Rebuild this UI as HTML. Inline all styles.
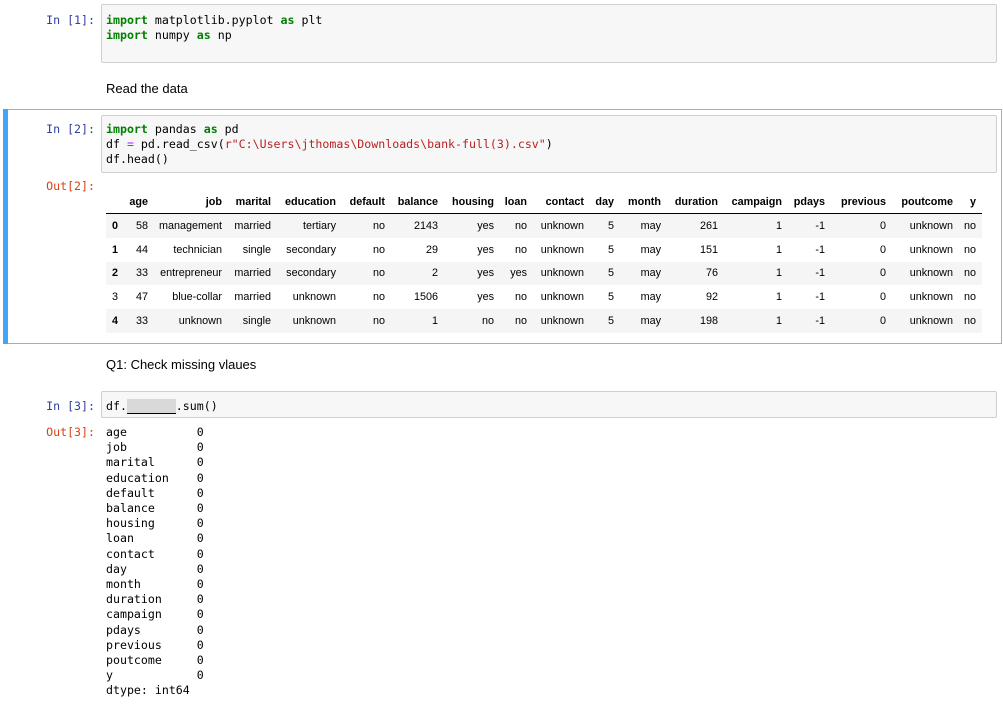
<!DOCTYPE html>
<html><head><meta charset="utf-8"><style>
body{margin:0;width:1003px;height:709px;background:#fff;position:relative;overflow:hidden;font-family:"Liberation Sans",Arial,sans-serif;}
.a{position:absolute;}
.mono{font-family:"DejaVu Sans Mono","Liberation Mono",monospace;font-size:11.6px;line-height:15.2px;white-space:pre;color:#000;}
.pin{color:#303F9F;text-align:right;width:95px;left:0;}
.pout{color:#D84315;text-align:right;width:95px;left:0;}
.box{background:#f7f7f7;border:1px solid #cfcfcf;border-radius:2px;box-sizing:border-box;}
.k{color:#008000;font-weight:bold;}
.s{color:#BA2121;}
.o{color:#AA22FF;}
.md{font-size:13px;color:#000;}
table{border-collapse:collapse;table-layout:fixed;font-size:10.8px;color:#000;}
td,th{padding:0;text-align:right;white-space:nowrap;height:23.8px;}
th{font-weight:bold;}
thead th{height:22px;border-bottom:1px solid #000;vertical-align:middle;}
tbody tr:nth-child(odd){background:#f5f5f5;}
td.i,th.i{text-align:left;padding-left:6px;font-weight:bold;}
</style></head><body>

<div class="a mono pin" style="top:13px">In [1]:</div>
<div class="a box" style="left:101px;top:4px;width:896px;height:59px"></div>
<div class="a mono" style="left:106px;top:13px"><span class="k">import</span> matplotlib.pyplot <span class="k">as</span> plt
<span class="k">import</span> numpy <span class="k">as</span> np</div>

<div class="a md" style="left:106px;top:81px">Read the data</div>

<div class="a" style="left:3px;top:109px;width:999px;height:235px;border:1px solid #ababab;box-sizing:border-box;"></div>
<div class="a" style="left:3px;top:109px;width:5px;height:235px;background:#42A5F5;"></div>
<div class="a mono pin" style="top:122px">In [2]:</div>
<div class="a box" style="left:101px;top:115px;width:896px;height:58px"></div>
<div class="a mono" style="left:106px;top:122px"><span class="k">import</span> pandas <span class="k">as</span> pd
df <span class="o">=</span> pd.read_csv(<span class="s">r"C:\Users\jthomas\Downloads\bank-full(3).csv"</span>)
df.head()</div>
<div class="a mono pout" style="top:179px">Out[2]:</div>

<table class="a" style="left:106px;top:190px;width:876px">
<colgroup><col style="width:20px"><col style="width:22px"><col style="width:74px"><col style="width:49px"><col style="width:65px"><col style="width:49px"><col style="width:53px"><col style="width:56px"><col style="width:33px"><col style="width:57px"><col style="width:30px"><col style="width:47px"><col style="width:57px"><col style="width:64px"><col style="width:43px"><col style="width:61px"><col style="width:67px"><col style="width:23px"><col style="width:6px"></colgroup>
<thead><tr><th style="height:23px"></th><th>age</th><th>job</th><th>marital</th><th>education</th><th>default</th><th>balance</th><th>housing</th><th>loan</th><th>contact</th><th>day</th><th>month</th><th>duration</th><th>campaign</th><th>pdays</th><th>previous</th><th>poutcome</th><th>y</th><th></th></tr></thead>
<tbody>
<tr><td class="i">0</td><td>58</td><td>management</td><td>married</td><td>tertiary</td><td>no</td><td>2143</td><td>yes</td><td>no</td><td>unknown</td><td>5</td><td>may</td><td>261</td><td>1</td><td>-1</td><td>0</td><td>unknown</td><td>no</td><td></td></tr>
<tr><td class="i">1</td><td>44</td><td>technician</td><td>single</td><td>secondary</td><td>no</td><td>29</td><td>yes</td><td>no</td><td>unknown</td><td>5</td><td>may</td><td>151</td><td>1</td><td>-1</td><td>0</td><td>unknown</td><td>no</td><td></td></tr>
<tr><td class="i">2</td><td>33</td><td>entrepreneur</td><td>married</td><td>secondary</td><td>no</td><td>2</td><td>yes</td><td>yes</td><td>unknown</td><td>5</td><td>may</td><td>76</td><td>1</td><td>-1</td><td>0</td><td>unknown</td><td>no</td><td></td></tr>
<tr><td class="i" style="font-weight:normal">3</td><td>47</td><td>blue-collar</td><td>married</td><td>unknown</td><td>no</td><td>1506</td><td>yes</td><td>no</td><td>unknown</td><td>5</td><td>may</td><td>92</td><td>1</td><td>-1</td><td>0</td><td>unknown</td><td>no</td><td></td></tr>
<tr><td class="i">4</td><td>33</td><td>unknown</td><td>single</td><td>unknown</td><td>no</td><td>1</td><td>no</td><td>no</td><td>unknown</td><td>5</td><td>may</td><td>198</td><td>1</td><td>-1</td><td>0</td><td>unknown</td><td>no</td><td></td></tr>
</tbody></table>

<div class="a md" style="left:106px;top:357px">Q1: Check missing vlaues</div>

<div class="a mono pin" style="top:399px">In [3]:</div>
<div class="a box" style="left:101px;top:391px;width:896px;height:27px"></div>
<div class="a" style="left:127px;top:399px;width:49px;height:14px;background:#d9d9d9;border-bottom:1px solid #000;"></div>
<div class="a mono" style="left:106px;top:399px">df.       .sum()</div>
<div class="a mono pout" style="top:425px">Out[3]:</div>
<div class="a mono" style="left:106px;top:425px">age          0
job          0
marital      0
education    0
default      0
balance      0
housing      0
loan         0
contact      0
day          0
month        0
duration     0
campaign     0
pdays        0
previous     0
poutcome     0
y            0
dtype: int64</div>
</body></html>
